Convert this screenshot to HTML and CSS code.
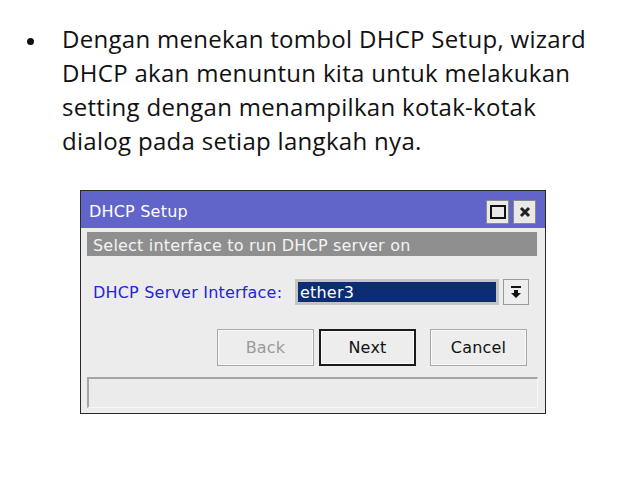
FILE: index.html
```html
<!DOCTYPE html>
<html>
<head>
<meta charset="utf-8">
<link rel="stylesheet" href="styles.css">
</head>
<body>
<div class="slide">
  <ul class="points">
    <li>Dengan menekan tombol DHCP Setup, wizard<br>DHCP akan menuntun kita untuk melakukan<br>setting dengan menampilkan kotak-kotak<br>dialog pada setiap langkah nya.</li>
  </ul>
  <div class="dialog">
    <div class="titlebar">
      <span class="title">DHCP Setup</span>
      <div class="winbtns">
        <span class="winbtn"><svg width="16" height="14" viewBox="0 0 16 14"><rect x="1" y="1" width="14" height="12" fill="none" stroke="#111" stroke-width="2"/></svg></span>
        <span class="winbtn"><svg width="12" height="12" viewBox="0 0 12 12"><path d="M2 2 L10 10 M10 2 L2 10" stroke="#222" stroke-width="3"/></svg></span>
      </div>
    </div>
    <div class="body">
      <div class="banner">Select interface to run DHCP server on</div>
      <div class="field-row">
        <span class="label">DHCP Server Interface:</span>
        <span class="select">ether3</span>
        <span class="dropbtn"><svg width="12" height="14" viewBox="0 0 12 14"><rect x="1" y="1" width="10" height="2" fill="#111"/><path d="M4 5 H8 V8 H11 L6 13 L1 8 H4 Z" fill="#111"/></svg></span>
      </div>
      <div class="btn-row">
        <span class="btn disabled">Back</span>
        <span class="btn default">Next</span>
        <span class="btn cancel">Cancel</span>
      </div>
      <div class="status"></div>
    </div>
  </div>
</div>
</body>
</html>
```
FILE: styles.css
```css
html, body {
  margin: 0;
  padding: 0;
  background: #ffffff;
}
.slide {
  width: 638px;
  height: 478px;
  position: relative;
  overflow: hidden;
}
.points {
  margin: 0;
  padding: 22px 0 0 62px;
  list-style: none;
  font-family: "Open Sans", "Lato", sans-serif;
  font-size: 24px;
  letter-spacing: 0.3px;
  line-height: 34px;
  color: #111;
  white-space: nowrap;
}
.points li {
  position: relative;
}
.points li::before {
  content: "";
  position: absolute;
  left: -35px;
  top: 16px;
  width: 7px;
  height: 7px;
  border-radius: 50%;
  background: #111;
}
.dialog {
  margin: 32px 0 0 80px;
  width: 464px;
  height: 222px;
  border: 1px solid #2a2a2a;
  background: #ececec;
  display: flex;
  flex-direction: column;
  font-family: "DejaVu Sans", sans-serif;
  letter-spacing: 0.2px;
}
.titlebar {
  height: 37px;
  background: #6165c9;
  display: flex;
  align-items: center;
  justify-content: space-between;
  padding: 0 9px 0 8px;
}
.title {
  color: #ffffff;
  font-size: 16px;
  padding-top: 4px;
}
.winbtns {
  display: flex;
  gap: 4px;
  padding-top: 5px;
}
.winbtn {
  width: 21px;
  height: 22px;
  background: #e9e9e9;
  border: 1px solid #8a8a8a;
  display: flex;
  align-items: center;
  justify-content: center;
}
.body {
  flex: 1;
  padding: 4px 8px 0 6px;
  display: flex;
  flex-direction: column;
}
.banner {
  height: 24px;
  background: #8f8f8f;
  color: #f4f4f4;
  font-size: 16px;
  line-height: 27px;
  padding-left: 6px;
  white-space: nowrap;
}
.field-row {
  margin-top: 23px;
  display: flex;
  align-items: center;
  height: 26px;
}
.label {
  color: #2323e0;
  font-size: 16px;
  padding-left: 6px;
  width: 202px;
  white-space: nowrap;
}
.select {
  width: 196px;
  height: 20px;
  background: #0b2d74;
  border: 3px solid #c4c4c4;
  color: #ffffff;
  font-size: 16px;
  line-height: 22px;
  padding-left: 2px;
}
.dropbtn {
  margin-left: 4px;
  width: 24px;
  height: 24px;
  border: 1px solid #9a9a9a;
  background: #eeeeee;
  display: flex;
  align-items: center;
  justify-content: center;
}
.btn-row {
  margin-top: 24px;
  display: flex;
  padding-left: 130px;
}
.btn {
  height: 35px;
  width: 95px;
  border: 1px solid #a8a8a8;
  background: #ededed;
  box-shadow: inset 0 0 0 1px #f8f8f8;
  display: flex;
  align-items: center;
  justify-content: center;
  font-size: 16px;
  color: #111;
}
.btn.disabled {
  color: #9a9a9a;
}
.btn.default {
  margin-left: 5px;
  border: 2px solid #1a1a1a;
  width: 93px;
  height: 33px;
}
.btn.cancel {
  margin-left: 14px;
}
.status {
  margin-top: 11px;
  height: 28px;
  width: 448px;
  border-top: 2px solid #a5a5a5;
  border-left: 2px solid #a5a5a5;
  border-right: 1px solid #f7f7f7;
  border-bottom: 1px solid #f7f7f7;
  background: #ebebeb;
}
```
